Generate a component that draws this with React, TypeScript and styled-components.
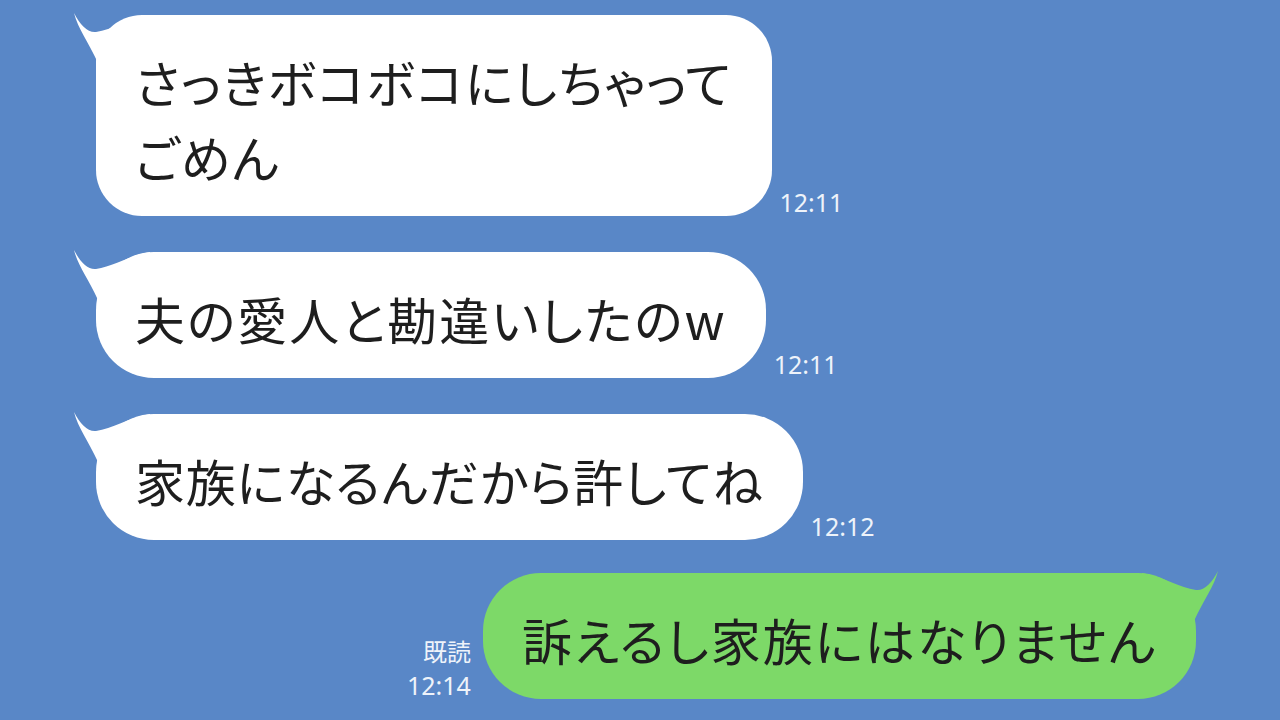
import React from "react";
import styled, { createGlobalStyle } from "styled-components";

const GlobalStyle = createGlobalStyle`
  html, body {
    margin: 0;
    padding: 0;
    background: #5987c7;
  }
  body {
    font-family: "Noto Sans CJK JP", "Noto Sans", sans-serif;
  }
`;

const Screen = styled.div`
  width: 1280px;
  height: 720px;
  overflow: hidden;
  box-sizing: border-box;
  padding: 15px 84px 0 96px;
  display: flex;
  flex-direction: column;
  gap: 36px;
`;

const Row = styled.div<{ $mine?: boolean }>`
  display: flex;
  align-items: flex-end;
  justify-content: ${(p) => (p.$mine ? "flex-end" : "flex-start")};
  gap: ${(p) => (p.$mine ? "12px" : "8px")};
  margin-top: ${(p) => (p.$mine ? "-3px" : "0")};
`;

const Bubble = styled.div<{ $mine?: boolean; $radius?: number; $spacing?: number }>`
  position: relative;
  box-sizing: border-box;
  padding: 29px 39px 22px 39px;
  background: ${(p) => (p.$mine ? "#7dd968" : "#ffffff")};
  border-radius: ${(p) => p.$radius ?? 58}px;
  color: #1e1e1e;
  font-family: "Noto Sans CJK JP", sans-serif;
  font-size: 50px;
  line-height: 75px;
  font-feature-settings: "palt";
  letter-spacing: ${(p) => p.$spacing ?? 0}px;
  white-space: nowrap;
`;

const Tail = styled.svg<{ $mine?: boolean }>`
  position: absolute;
  top: -4px;
  width: 80px;
  height: 52px;
  ${(p) =>
    p.$mine
      ? "right: -24px; transform: scaleX(-1);"
      : "left: -24px;"}
`;

const Meta = styled.div`
  display: flex;
  flex-direction: column;
  align-items: flex-end;
  gap: 8px;
  color: #eef3fa;
  font-family: "Noto Sans", "Noto Sans CJK JP", sans-serif;
  font-size: 25px;
  line-height: 27px;
`;

const ReadMark = styled.div`
  font-family: "Noto Sans CJK JP", sans-serif;
  font-size: 24px;
  line-height: 27px;
`;

const BubbleTail = ({ mine }: { mine?: boolean }) => (
  <Tail $mine={mine} viewBox="0 0 80 52">
    <path
      d="M2,2 C8,14 16,22 24,21 C40,19 56,8 78,4 L78,52 L26,52 C16,30 6,18 2,2 Z"
      fill={mine ? "#7dd968" : "#ffffff"}
    />
  </Tail>
);

const messages = [
  { lines: ["さっきボコボコにしちゃって", "ごめん"], time: "12:11", radius: 46, spacing: 1.5 },
  { lines: ["夫の愛人と勘違いしたのw"], time: "12:11", spacing: 2 },
  { lines: ["家族になるんだから許してね"], time: "12:12", spacing: 0.8 },
];

export default function App() {
  return (
    <>
      <GlobalStyle />
      <Screen>
        {messages.map((m, i) => (
          <Row key={i}>
            <Bubble $radius={m.radius} $spacing={m.spacing}>
              <BubbleTail />
              {m.lines.map((l, j) => (
                <div key={j}>{l}</div>
              ))}
            </Bubble>
            <Meta>{m.time}</Meta>
          </Row>
        ))}
        <Row $mine>
          <Meta>
            <ReadMark>既読</ReadMark>
            <div>12:14</div>
          </Meta>
          <Bubble $mine $spacing={2}>
            <BubbleTail mine />
            訴えるし家族にはなりません
          </Bubble>
        </Row>
      </Screen>
    </>
  );
}
